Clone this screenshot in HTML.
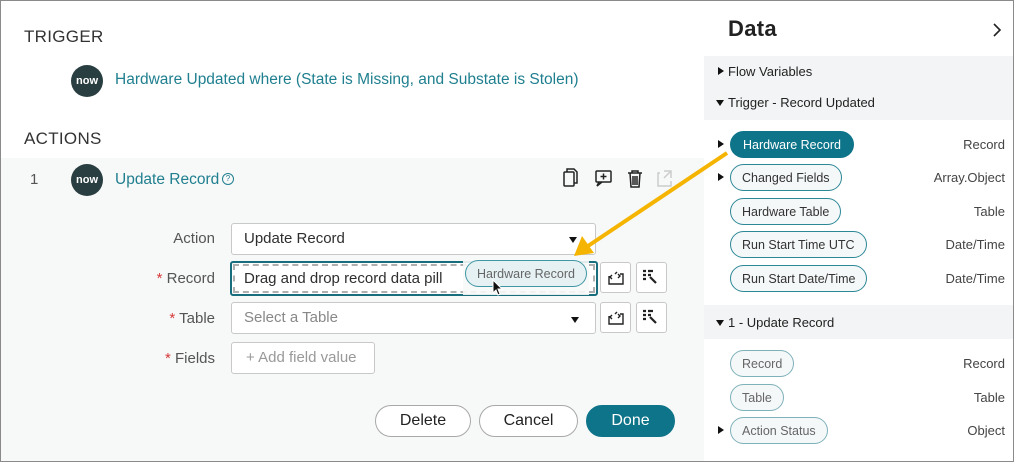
<!DOCTYPE html>
<html><head><meta charset="utf-8"><style>
*{box-sizing:border-box;margin:0;padding:0}
body{width:1014px;height:462px;position:relative;overflow:hidden;background:#fff;font-family:"Liberation Sans",sans-serif;color:#2e2e2e}
.a{position:absolute}
.frame{left:0;top:0;width:1014px;height:462px;border:1px solid #8a8a8a;z-index:50;pointer-events:none}
.leftbg{left:0;top:158px;width:704px;height:304px;background:#f7f8f8}
.h{font-size:17px;color:#333;letter-spacing:.3px}
.logo{width:32px;height:32px;border-radius:50%;background:#293e40;color:#fff;font-size:11px;font-weight:bold;text-align:center;line-height:32px}
.link{color:#1f7f8f;font-size:15.5px}
.lbl{font-size:15px;color:#555;text-align:right;width:80px}
.star{color:#d63a3a}
.inp{background:#fff;border:1px solid #c8c8c8;border-radius:3px;font-size:15px;padding-left:12px;line-height:30px}
.sq{width:31px;height:31px;background:#fff;border:1px solid #c8c8c8;border-radius:3px}
.btn{height:32px;border-radius:16px;border:1px solid #a8a8a8;background:#fff;font-size:16px;text-align:center;line-height:30px;color:#222}
.band{background:#f3f4f5;left:704px;width:310px}
.sec{font-size:13px;color:#222}
.pill{height:27px;border:1.5px solid #2d8896;border-radius:14px;background:#f4f8f9;font-size:12.5px;color:#333;padding:0 11px;display:flex;align-items:center;white-space:nowrap}
.pill.g{border-color:#7fb1b9;color:#666}
.typ{right:9px;font-size:13px;color:#444;text-align:right}
.tri{width:0;height:0;border-top:4px solid transparent;border-bottom:4px solid transparent;border-left:6px solid #111}
.trd{width:0;height:0;border-left:4px solid transparent;border-right:4px solid transparent;border-top:6px solid #111}
</style></head><body>
<div class="a frame"></div>
<div class="a leftbg"></div>
<div class="a h" style="left:24px;top:27px">TRIGGER</div>
<div class="a logo" style="left:71px;top:65px">now</div>
<div class="a link" style="left:115px;top:71px">Hardware Updated where (State is Missing, and Substate is Stolen)</div>
<div class="a h" style="left:24px;top:129px">ACTIONS</div>

<div class="a" style="left:30px;top:171px;font-size:15px;color:#555">1</div>
<div class="a logo" style="left:71px;top:164px">now</div>
<div class="a link" style="left:115px;top:171px">Update Record</div>
<div class="a" style="left:222px;top:173px;width:12px;height:12px;border:1.3px solid #1f7f8f;border-radius:50%;font-size:8px;color:#1f7f8f;text-align:center;line-height:10px">?</div>
<svg class="a" style="left:560px;top:168px" width="120" height="22" fill="none" stroke="#222" stroke-width="1.5">
<rect x="4" y="4" width="10" height="14" rx="1"/><path d="M7 4V1h7l3 3v11h-3"/>
<rect x="36" y="3" width="15" height="11" rx="1"/><path d="M39 14l-2 4 5-4M43.5 5.5v6M40.5 8.5h6"/>
<path d="M68 5h14M72 5V3h6v2M70 5l1 14h8l1-14M73 8v9M75 8v9M77 8v9"/>
<path stroke="#ccc" d="M100 5h-2v13h13v-5M104 3h7v7M111 3l-7 7"/>
</svg>

<div class="a lbl" style="left:135px;top:230px">Action</div>
<div class="a inp" style="left:231px;top:223px;width:365px;height:32px">Update Record</div>
<div class="a trd" style="left:569px;top:237px"></div>

<div class="a lbl" style="left:135px;top:270px"><span class="star">*</span> Record</div>
<div class="a inp" style="left:230px;top:261px;width:368px;height:35px;border:2px solid #196e7d;outline:2px dashed #b0b0b0;outline-offset:-5px;line-height:31px">Drag and drop record data pill</div>
<div class="a" style="left:463px;top:259px;width:126px;height:36px;background:#f7f8f8;opacity:.9"></div>
<div class="a pill" style="left:465px;top:260px;font-size:12.5px;color:#666;background:#e6f1f3;border-color:#3f97a4">Hardware Record</div>
<svg class="a" style="left:490px;top:279px" width="14" height="18"><path d="M3 1v13l3-3 2 5 2-1-2-5h4z" fill="#111" stroke="#fff" stroke-width="1"/></svg>

<div class="a lbl" style="left:135px;top:310px"><span class="star">*</span> Table</div>
<div class="a inp" style="left:231px;top:302px;width:365px;height:32px;color:#888">Select a Table</div>
<div class="a trd" style="left:571px;top:317px"></div>

<div class="a sq" style="left:600px;top:262px"></div><div class="a sq" style="left:636px;top:262px"></div>
<div class="a sq" style="left:600px;top:302px"></div><div class="a sq" style="left:636px;top:302px"></div>
<svg class="a" style="left:600px;top:262px" width="70" height="72" fill="none" stroke="#222" stroke-width="1.4">
<g id="i"><path d="M9 14v8h14v-10h-3M12 13l-2 2 2 2M15 12l2-2M18 12l2 2-2 2"/>
<path d="M43 9h3M43 13h3M43 17h3M48 9h5M48 13h3M50 15l6 6" stroke-width="2.2"/></g>
<use href="#i" y="40"/>
</svg>

<div class="a lbl" style="left:135px;top:350px"><span class="star">*</span> Fields</div>
<div class="a inp" style="left:231px;top:342px;width:144px;height:32px;color:#999;padding-left:14px">+ Add field value</div>

<div class="a btn" style="left:375px;top:405px;width:96px">Delete</div>
<div class="a btn" style="left:479px;top:405px;width:99px">Cancel</div>
<div class="a btn" style="left:586px;top:405px;width:89px;background:#0e7489;border-color:#0e7489;color:#fff">Done</div>

<!-- right panel -->
<div class="a" style="left:728px;top:16px;font-size:22px;color:#222;font-weight:bold;letter-spacing:.3px">Data</div>
<svg class="a" style="left:991px;top:22px" width="12" height="16"><path d="M3 2l6 6-6 6" fill="none" stroke="#222" stroke-width="1.6"/></svg>
<div class="a band" style="top:56px;height:64px"></div>
<div class="a tri" style="left:718px;top:67px"></div>
<div class="a sec" style="left:728px;top:64px">Flow Variables</div>
<div class="a trd" style="left:716px;top:100px"></div>
<div class="a sec" style="left:728px;top:95px">Trigger - Record Updated</div>

<div class="a tri" style="left:718px;top:140px"></div>
<div class="a pill" style="left:730px;top:131px;background:#0e7489;border-color:#0e7489;color:#fff;padding:0 12px">Hardware Record</div>
<div class="a typ" style="top:137px">Record</div>
<div class="a tri" style="left:718px;top:173px"></div>
<div class="a pill" style="left:730px;top:164px">Changed Fields</div>
<div class="a typ" style="top:170px">Array.Object</div>
<div class="a pill" style="left:730px;top:198px">Hardware Table</div>
<div class="a typ" style="top:204px">Table</div>
<div class="a pill" style="left:730px;top:231px">Run Start Time UTC</div>
<div class="a typ" style="top:237px">Date/Time</div>
<div class="a pill" style="left:730px;top:265px">Run Start Date/Time</div>
<div class="a typ" style="top:271px">Date/Time</div>

<div class="a band" style="top:305px;height:34px"></div>
<div class="a trd" style="left:716px;top:320px"></div>
<div class="a sec" style="left:728px;top:315px">1 - Update Record</div>
<div class="a pill g" style="left:730px;top:350px">Record</div>
<div class="a typ" style="top:356px">Record</div>
<div class="a pill g" style="left:730px;top:384px">Table</div>
<div class="a typ" style="top:390px">Table</div>
<div class="a tri" style="left:718px;top:426px"></div>
<div class="a pill g" style="left:730px;top:417px">Action Status</div>
<div class="a typ" style="top:423px">Object</div>

<svg class="a" style="left:560px;top:140px;z-index:20" width="180" height="130">
<path d="M167 13L25 108" stroke="#f4b400" stroke-width="4" fill="none"/>
<path d="M14 116l8-20 12 17z" fill="#f4b400"/>
</svg>
</body></html>
